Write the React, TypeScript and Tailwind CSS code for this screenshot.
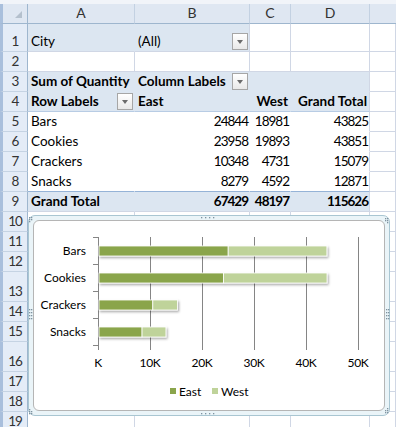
import React from 'react';
import clsx from 'clsx';

type Spec = {
  t?: string;
  b?: boolean;
  r?: boolean;
  fill?: boolean;
  drop?: boolean;
  br?: string;
  bb?: string;
};

// border colour classes (gridline, pivot fill, white body, pivot rules)
const gR = 'border-r-[#d0d7e5]';
const gB = 'border-b-[#d0d7e5]';
const fR = 'border-r-[#dce6f1]';
const fB = 'border-b-[#dce6f1]';
const wR = 'border-r-white';
const wB = 'border-b-white';
const lB = 'border-b-[#b8cce4]';
const dB = 'border-b-[#95b3d7]';

const body = (name: string, e: string, w: string, tot: string, bb: string): Spec[] => [
  { t: name, br: wR, bb },
  { t: e, r: true, br: wR, bb },
  { t: w, r: true, br: wR, bb },
  { t: tot, r: true, bb },
  {},
];

const blank: Spec[] = [{}, {}, {}, {}, {}];

const rows: Spec[][] = [
  [{ t: 'City', fill: true, br: fR }, { t: '(All)', fill: true, drop: true }, {}, {}, {}],
  blank,
  [
    { t: 'Sum of Quantity', b: true, fill: true, br: fR, bb: fB },
    { t: 'Column Labels', b: true, fill: true, drop: true, br: fR, bb: fB },
    { fill: true, br: fR, bb: fB },
    { fill: true, bb: fB },
    {},
  ],
  [
    { t: 'Row Labels', b: true, fill: true, drop: true, br: fR, bb: lB },
    { t: 'East', b: true, fill: true, br: fR, bb: lB },
    { t: 'West', b: true, r: true, fill: true, br: fR, bb: lB },
    { t: 'Grand Total', b: true, r: true, fill: true, bb: lB },
    {},
  ],
  body('Bars', '24844', '18981', '43825', wB),
  body('Cookies', '23958', '19893', '43851', wB),
  body('Crackers', '10348', '4731', '15079', wB),
  body('Snacks', '8279', '4592', '12871', dB),
  [
    { t: 'Grand Total', b: true, fill: true, br: fR },
    { t: '67429', b: true, r: true, fill: true, br: fR },
    { t: '48197', b: true, r: true, fill: true, br: fR },
    { t: '115626', b: true, r: true, fill: true },
    {},
  ],
  blank, blank, blank, blank, blank, blank, blank, blank, blank, blank,
];

function DropButton() {
  return (
    <div className="-mb-[2px] -mr-[1px] flex h-[17px] w-[16px] shrink-0 items-center justify-center border border-[#a6a6a6] bg-gradient-to-b from-white to-[#e9e9e9]">
      <div className="h-0 w-0 border-x-[3.5px] border-t-[4px] border-x-transparent border-t-[#6b6b6b]" />
    </div>
  );
}

function Cell({ s }: { s: Spec }) {
  const num = !!s.t && /^\d+$/.test(s.t);
  return (
    <div
      className={clsx(
        'flex items-end overflow-visible whitespace-nowrap border-b border-r pb-[3px] pl-[3px] text-[13.5px] leading-none text-black',
        s.br ?? gR,
        s.bb ?? gB,
        s.fill && 'bg-[#dce6f1]',
        s.b && 'font-bold',
        num ? 'pr-[1px] tracking-[-1px]' : 'pr-[2px]',
        s.r ? 'justify-end' : 'justify-between'
      )}
    >
      {s.t && <span>{s.t}</span>}
      {s.drop && <DropButton />}
    </div>
  );
}

function RowHead({ n }: { n: number }) {
  return (
    <div className="flex items-end justify-center border-b border-l-[3px] border-r border-b-[#c5d3e3] border-l-[#a9bfdc] border-r-[#9eb6ce] bg-[#e4ecf7] pb-[3px] text-[13.5px] leading-none tracking-[-1px] text-[#333]">
      {n}
    </div>
  );
}

function ColHead({ l }: { l: string }) {
  return (
    <div className="flex items-end justify-center border-b border-r border-b-[#9eb6ce] border-r-[#c3d1e2] bg-[#dfe7f2] pb-[3px] text-[14px] leading-none text-[#333]">
      {l}
    </div>
  );
}

const cats = [
  { name: 'Bars', east: 24844, west: 18981 },
  { name: 'Cookies', east: 23958, west: 19893 },
  { name: 'Crackers', east: 10348, west: 4731 },
  { name: 'Snacks', east: 8279, west: 4592 },
];

const x0 = 98;
const k = 0.0052; // px per unit

function Chart() {
  const dots = (pts: [number, number][]) =>
    pts.map(([x, y], i) => <rect key={i} x={x} y={y} width={1.3} height={1.3} fill="#7f93a0" />);
  return (
    <div className="absolute left-[28px] top-[215px] h-[201px] w-[362px] rounded-[7px] border border-[#a9c6d2] bg-[#eaf4f8] p-[4px]">
      <div className="h-full w-full rounded-[6px] border border-[#b5b5b5] bg-white" />
      <svg className="absolute left-[-1px] top-[-1px]" width={362} height={201} viewBox="0 0 362 201">
        <defs>
          <filter id="sh" x="-10%" y="-50%" width="120%" height="200%">
            <feDropShadow dx="1.2" dy="1.6" stdDeviation="0.9" floodColor="#000" floodOpacity="0.35" />
          </filter>
        </defs>
        <g transform="translate(-28,-215)" fontFamily="Lato, 'Liberation Sans', sans-serif" fontSize="12" fill="#000">
          {[150, 202, 254, 306, 358].map((x) => (
            <line key={x} x1={x + 0.5} y1={237} x2={x + 0.5} y2={350} stroke="#858585" strokeWidth={1} />
          ))}
          <line x1={x0 + 0.5} y1={237} x2={x0 + 0.5} y2={350} stroke="#858585" />
          {[237, 264, 291, 318, 345].map((y) => (
            <line key={y} x1={93} y1={y + 0.5} x2={x0} y2={y + 0.5} stroke="#858585" />
          ))}
          {cats.map((c, i) => {
            const y = 246 + i * 27;
            const e = c.east * k;
            const w = c.west * k;
            return (
              <g key={c.name}>
                <g filter="url(#sh)">
                  <rect x={x0 + 1} y={y} width={e} height={10} fill="#8aa54c" stroke="#fff" strokeWidth={0.8} />
                  <rect x={x0 + 1 + e} y={y} width={w} height={10} fill="#bfd39a" stroke="#fff" strokeWidth={0.8} />
                </g>
                <text x={86} y={y + 9} textAnchor="end">
                  {c.name}
                </text>
              </g>
            );
          })}
          {['K', '10K', '20K', '30K', '40K', '50K'].map((l, i) => (
            <text key={l} x={x0 + i * 52} y={367} textAnchor="middle" letterSpacing="-0.3">
              {l}
            </text>
          ))}
          <rect x={170} y={388} width={6} height={6} fill="#8aa54c" />
          <text x={179} y={396}>East</text>
          <rect x={212} y={388} width={6} height={6} fill="#bfd39a" />
          <text x={221} y={396}>West</text>
          {dots([[201, 217], [205, 217], [209, 217], [213, 217]])}
          {dots([[201, 413], [205, 413], [209, 413], [213, 413]])}
          {dots([[29, 309], [29, 312], [29, 315], [29, 318], [31, 309], [31, 312], [31, 315], [31, 318]])}
          {dots([[386, 309], [386, 312], [386, 315], [386, 318], [388, 309], [388, 312], [388, 315], [388, 318]])}
          {dots([[29, 217], [31, 217], [29, 219], [31, 219], [29, 221]])}
          {dots([[385, 218], [387, 218], [385, 220], [387, 220], [387, 222]])}
          {dots([[29, 409], [29, 411], [31, 411], [29, 413], [31, 413]])}
          {dots([[387, 408], [385, 410], [387, 410], [385, 412], [387, 412]])}
        </g>
      </svg>
    </div>
  );
}

export default function App() {
  return (
    <div className="relative h-[427px] w-[396px] overflow-hidden bg-white font-['Lato','Liberation_Sans',sans-serif]">
      <div className="h-[4px] bg-[#f1f4f9]" />
      <div className="grid grid-cols-[28px_107px_115px_41px_79px_26px] grid-rows-[20px_28px_repeat(11,20px)_30px_20px_20px_30px_20px_20px_20px]">
        <div className="relative border-b border-l-[3px] border-r border-b-[#9eb6ce] border-l-[#a9bfdc] border-r-[#9eb6ce] bg-[#dfe7f2]">
          <div className="absolute bottom-[5px] right-[5px] h-0 w-0 border-b-[7px] border-l-[7px] border-b-[#b4c0cd] border-l-transparent" />
        </div>
        <ColHead l="A" />
        <ColHead l="B" />
        <ColHead l="C" />
        <ColHead l="D" />
        <div className="border-b border-b-[#9eb6ce] bg-[#dfe7f2]" />
        {rows.map((r, i) => (
          <React.Fragment key={i}>
            <RowHead n={i + 1} />
            {r.map((s, j) => (
              <Cell key={j} s={s} />
            ))}
          </React.Fragment>
        ))}
      </div>
      <Chart />
    </div>
  );
}
